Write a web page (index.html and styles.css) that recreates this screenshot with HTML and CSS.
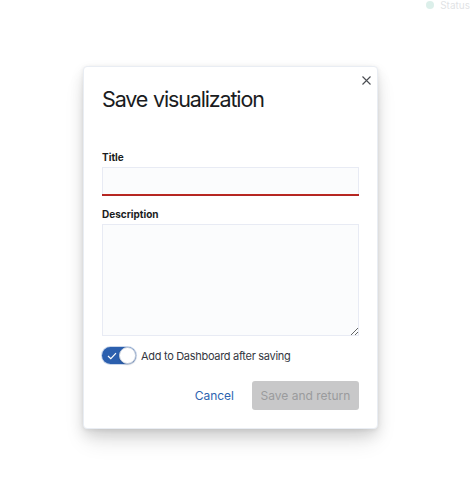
FILE: index.html
```html
<!DOCTYPE html>
<html lang="en">
<head>
<meta charset="utf-8">
<title>Save visualization</title>
<link rel="stylesheet" href="styles.css">
</head>
<body>
<div class="page">
  <div class="topbar">
    <span class="status-dot"></span>
    <span class="status-text">Status</span>
  </div>
</div>
<div class="modal" role="dialog" aria-labelledby="modal-title">
  <button class="close" aria-label="Close">
    <svg width="9" height="9" viewBox="0 0 9 9"><path d="M0.5 0.5 L8.5 8.5 M8.5 0.5 L0.5 8.5" stroke="#4a4d52" stroke-width="1.1" fill="none"/></svg>
  </button>
  <h1 id="modal-title" class="modal-title">Save visualization</h1>
  <form class="form">
    <label class="label" for="title">Title</label>
    <input id="title" class="input input-invalid" type="text">
    <label class="label label-desc" for="desc">Description</label>
    <textarea id="desc" class="textarea"></textarea>
    <div class="switch-row">
      <span class="switch">
        <svg class="check" width="10" height="8" viewBox="0 0 10 8"><path d="M1 4 L3.8 6.6 L9 1.2" stroke="#fff" stroke-width="1.2" fill="none"/></svg>
        <span class="knob"></span>
      </span>
      <span class="switch-label">Add to Dashboard after saving</span>
    </div>
    <div class="footer">
      <button type="button" class="btn-cancel">Cancel</button>
      <button type="button" class="btn-save" disabled>Save and return</button>
    </div>
  </form>
</div>
</body>
</html>
```
FILE: styles.css
```css
html, body {
  margin: 0;
  padding: 0;
  background: #ffffff;
  font-family: Inter, "Noto Sans", sans-serif;
  color: #1a1c21;
}
.page {
  width: 474px;
  height: 482px;
}
.topbar {
  display: flex;
  justify-content: flex-end;
  align-items: center;
  gap: 6px;
  padding-right: 4px;
  height: 10px;
  opacity: 0.2;
}
.status-dot {
  width: 8px;
  height: 8px;
  border-radius: 50%;
  background: #54b399;
}
.status-text {
  font-size: 10px;
  line-height: 10px;
  color: #69707d;
}
.modal {
  position: absolute;
  left: 83px;
  top: 66px;
  width: 295px;
  box-sizing: border-box;
  padding: 18px 18px 18px 18px;
  background: #ffffff;
  border: 1px solid #e9edf3;
  border-radius: 4px;
  box-shadow: 0 1px 4px rgba(0,0,0,0.08), 0 6px 14px rgba(0,0,0,0.11), 0 14px 22px -4px rgba(0,0,0,0.12);
}
.close {
  position: absolute;
  top: 3px;
  right: 1px;
  width: 20px;
  height: 20px;
  padding: 0;
  border: 0;
  background: transparent;
  display: flex;
  align-items: center;
  justify-content: center;
}
.modal-title {
  margin: 0;
  font-size: 21.5px;
  line-height: 28px;
  font-weight: 400;
  letter-spacing: -1.15px;
  word-spacing: 1px;
  color: #1a1c21;
}
.form {
  display: flex;
  flex-direction: column;
  margin-top: 37px;
}
.label {
  font-size: 10px;
  line-height: 14px;
  font-weight: 700;
  color: #1a1c21;
  margin-bottom: 3px;
}
.label-desc {
  margin-top: 11px;
}
.input {
  box-sizing: border-box;
  height: 29px;
  width: 100%;
  margin: 0;
  border: 0;
  background: #fbfcfd;
  box-shadow: inset 0 0 0 1px rgba(17,42,134,0.08);
  border-radius: 0;
}
.input-invalid {
  background-image: linear-gradient(#bd271e, #bd271e);
  background-size: 100% 2px;
  background-position: bottom;
  background-repeat: no-repeat;
}
.textarea {
  box-sizing: border-box;
  height: 112px;
  width: 100%;
  margin: 0;
  border: 0;
  background: #fbfcfd;
  box-shadow: inset 0 0 0 1px rgba(17,42,134,0.08);
  resize: both;
  font-family: inherit;
}
.switch-row {
  display: flex;
  align-items: center;
  gap: 5px;
  margin-top: 11px;
  height: 17px;
}
.switch {
  position: relative;
  box-sizing: border-box;
  width: 34px;
  height: 17px;
  border-radius: 9px;
  background: #2b5fae;
  box-shadow: 0 0 0 1px rgba(43,95,174,0.25);
  display: flex;
  align-items: center;
  justify-content: space-between;
  padding-left: 5px;
}
.check {
  display: block;
}
.knob {
  width: 17px;
  height: 17px;
  box-sizing: border-box;
  border-radius: 50%;
  background: #ffffff;
  border: 1px solid #c9d1dd;
  box-shadow: 0 1px 2px rgba(0,0,0,0.15);
}
.switch-label {
  font-size: 11px;
  line-height: 14px;
  letter-spacing: -0.3px;
  color: #343741;
}
.footer {
  display: flex;
  justify-content: flex-end;
  align-items: center;
  gap: 6px;
  margin-top: 17px;
}
.btn-cancel {
  height: 29px;
  padding: 0 12px;
  border: 0;
  background: transparent;
  font-family: inherit;
  font-size: 12px;
  color: #2d64b0;
}
.btn-save {
  height: 29px;
  width: 107px;
  padding: 0;
  border: 0;
  border-radius: 3px;
  background: #c8c8c9;
  font-family: inherit;
  font-size: 12px;
  color: #9a9b9d;
}
```
